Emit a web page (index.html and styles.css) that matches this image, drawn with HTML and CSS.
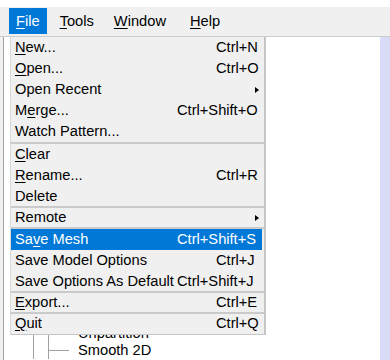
FILE: index.html
```html
<!DOCTYPE html>
<html lang="en">
<head>
    <meta charset="UTF-8">
    <title>File menu</title>
    <link rel="stylesheet" href="styles.css">
</head>
<body>
<div class="window">
    <div class="top-gap"></div>
    <div class="menubar">
        <span class="mb-item active"><u>F</u>ile</span>
        <span class="mb-item"><u>T</u>ools</span>
        <span class="mb-item"><u>W</u>indow</span>
        <span class="mb-item help"><u>H</u>elp</span>
    </div>
    <div class="content">
        <div class="frame-left"></div>
        <div class="tree-pane">
            <div class="tree-l1">
                <div class="tree-l2">
                    <div class="node">Unpartition</div>
                    <div class="node">Smooth 2D</div>
                </div>
            </div>
        </div>
        <div class="side-strip"></div>
    </div>

    <div class="popup">
        <div class="row"><span class="label"><u>N</u>ew...</span><span class="sc">Ctrl+N</span></div>
        <div class="row"><span class="label"><u>O</u>pen...</span><span class="sc">Ctrl+O</span></div>
        <div class="row"><span class="label">Open Recent</span><span class="sc sub"><i class="arrow"></i></span></div>
        <div class="row"><span class="label">M<u>e</u>rge...</span><span class="sc long">Ctrl+Shift+O</span></div>
        <div class="row"><span class="label">Watch Pattern...</span></div>
        <div class="sep wide"></div>
        <div class="row"><span class="label"><u>C</u>lear</span></div>
        <div class="row"><span class="label"><u>R</u>ename...</span><span class="sc">Ctrl+R</span></div>
        <div class="row"><span class="label">Delete</span></div>
        <div class="sep"></div>
        <div class="row"><span class="label">Remote</span><span class="sc sub"><i class="arrow"></i></span></div>
        <div class="sep half"></div>
        <div class="row selected"><span class="label">Sa<u>v</u>e Mesh</span><span class="sc long">Ctrl+Shift+S</span></div>
        <div class="row"><span class="label">Save Model Options</span><span class="sc">Ctrl+J</span></div>
        <div class="row"><span class="label">Save Options As Default</span><span class="sc long">Ctrl+Shift+J</span></div>
        <div class="sep"></div>
        <div class="row"><span class="label"><u>E</u>xport...</span><span class="sc">Ctrl+E</span></div>
        <div class="sep"></div>
        <div class="row"><span class="label"><u>Q</u>uit</span><span class="sc">Ctrl+Q</span></div>
    </div>
</div>
</body>
</html>
```

FILE: styles.css
```css
* {
    margin: 0;
    padding: 0;
    box-sizing: border-box;
}

body {
    width: 390px;
    height: 360px;
    overflow: hidden;
    background: #fff;
    font-family: "Liberation Sans", Arial, sans-serif;
    font-size: 14.67px;
    color: #000;
}

u {
    text-decoration: underline;
    text-underline-offset: 2px;
}

.window {
    position: relative;
    width: 390px;
    height: 360px;
    display: flex;
    flex-direction: column;
}

.top-gap {
    height: 7px;
    background: #fff;
}

/* menu bar */
.menubar {
    height: 30px;
    display: flex;
    gap: 6px;
    padding: 1px 0 0 9px;
    background: #f0f0f0;
    border-bottom: 1px solid #cdcdcd;
}
.mb-item {
    height: 26px;
    line-height: 26px;
    padding: 0 7px;
}
.mb-item.active {
    background: #0078d7;
    color: #fff;
}
.mb-item.help {
    margin-left: 4px;
}

/* area behind the popup */
.content {
    flex: 1;
    display: flex;
}
.frame-left {
    width: 4px;
    background: #f0f0f0;
    border-right: 1px solid #a0a0a0;
}
.tree-pane {
    flex: 1;
    display: flex;
    flex-direction: column;
    justify-content: flex-end;
    padding: 0 0 1px 29px;
}
.tree-l1 {
    border-left: 1px solid #a0a0a0;
    padding-left: 14px;
}
.tree-l2 {
    border-left: 1px solid #a0a0a0;
}
.node {
    height: 17px;
    line-height: 17px;
    display: flex;
    align-items: center;
    white-space: nowrap;
}
.node::before {
    content: "";
    width: 20px;
    height: 1px;
    margin-right: 9px;
    background: #a0a0a0;
}
.side-strip {
    width: 10px;
    background: #d9dcf8;
}

/* popup menu */
.popup {
    position: absolute;
    left: 10px;
    top: 37px;
    width: 256px;
    background: #f0f0f0;
    border-left: 1px solid #d9d9d9;
    border-right: 2px solid #c6c6c6;
    border-bottom: 1px solid #c6c6c6;
}
.row {
    height: 21px;
    line-height: 21px;
    margin-right: 2px;
    padding: 0 2px 0 4px;
    display: flex;
    align-items: center;
    white-space: nowrap;
}
.row.selected {
    background: #0078d7;
    color: #fff;
}
.label {
    flex: 1 0 auto;
}
.sc {
    width: 44px;
}
.sc.long {
    width: 83px;
}
.sc.sub {
    display: flex;
    justify-content: flex-end;
    padding-right: 1px;
}
.arrow {
    width: 0;
    height: 0;
    border-left: 4px solid #000;
    border-top: 3.5px solid transparent;
    border-bottom: 3.5px solid transparent;
}

.sep {
    height: 2px;
    margin: -1px 0;
    background: #cacaca;
}
.sep.wide {
    margin: 0;
}
.sep.half {
    margin-bottom: 0;
}
```
